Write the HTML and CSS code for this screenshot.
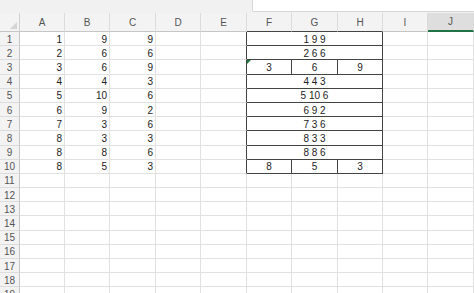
FILE: index.html
```html
<!DOCTYPE html>
<html lang="en">
<head>
    <meta charset="UTF-8">
    <meta name="viewport" content="width=device-width, initial-scale=1.0">
    <title>Sheet1</title>
    <link rel="stylesheet" href="styles.css">
</head>
<body>
    <!-- Formula bar edge -->
    <div class="top-bar">
        <div class="formula-box"></div>
    </div>

    <div class="sheet">
        <!-- Column headers -->
        <div class="row head">
            <div class="corner"><span class="corner-tri"></span></div>
            <div class="col">A</div>
            <div class="col">B</div>
            <div class="col">C</div>
            <div class="col">D</div>
            <div class="col">E</div>
            <div class="col blk">F</div>
            <div class="col blk">G</div>
            <div class="col blk">H</div>
            <div class="col">I</div>
            <div class="col selected">J</div>
        </div>

        <div class="row">
            <div class="rh">1</div>
            <div class="cell num">1</div><div class="cell num">9</div><div class="cell num">9</div>
            <div class="cell"></div><div class="cell edge"></div>
            <div class="cell box merged">1 9 9</div>
            <div class="cell"></div><div class="cell"></div>
        </div>
        <div class="row">
            <div class="rh">2</div>
            <div class="cell num">2</div><div class="cell num">6</div><div class="cell num">6</div>
            <div class="cell"></div><div class="cell edge"></div>
            <div class="cell box merged">2 6 6</div>
            <div class="cell"></div><div class="cell"></div>
        </div>
        <div class="row">
            <div class="rh">3</div>
            <div class="cell num">3</div><div class="cell num">6</div><div class="cell num">9</div>
            <div class="cell"></div><div class="cell edge"></div>
            <div class="cell box mid flagged">3</div><div class="cell box mid">6</div><div class="cell box mid">9</div>
            <div class="cell"></div><div class="cell"></div>
        </div>
        <div class="row">
            <div class="rh">4</div>
            <div class="cell num">4</div><div class="cell num">4</div><div class="cell num">3</div>
            <div class="cell"></div><div class="cell edge"></div>
            <div class="cell box merged">4 4 3</div>
            <div class="cell"></div><div class="cell"></div>
        </div>
        <div class="row">
            <div class="rh">5</div>
            <div class="cell num">5</div><div class="cell num">10</div><div class="cell num">6</div>
            <div class="cell"></div><div class="cell edge"></div>
            <div class="cell box merged">5 10 6</div>
            <div class="cell"></div><div class="cell"></div>
        </div>
        <div class="row">
            <div class="rh">6</div>
            <div class="cell num">6</div><div class="cell num">9</div><div class="cell num">2</div>
            <div class="cell"></div><div class="cell edge"></div>
            <div class="cell box merged">6 9 2</div>
            <div class="cell"></div><div class="cell"></div>
        </div>
        <div class="row">
            <div class="rh">7</div>
            <div class="cell num">7</div><div class="cell num">3</div><div class="cell num">6</div>
            <div class="cell"></div><div class="cell edge"></div>
            <div class="cell box merged">7 3 6</div>
            <div class="cell"></div><div class="cell"></div>
        </div>
        <div class="row">
            <div class="rh">8</div>
            <div class="cell num">8</div><div class="cell num">3</div><div class="cell num">3</div>
            <div class="cell"></div><div class="cell edge"></div>
            <div class="cell box merged">8 3 3</div>
            <div class="cell"></div><div class="cell"></div>
        </div>
        <div class="row">
            <div class="rh">9</div>
            <div class="cell num">8</div><div class="cell num">8</div><div class="cell num">6</div>
            <div class="cell"></div><div class="cell edge"></div>
            <div class="cell box merged">8 8 6</div>
            <div class="cell"></div><div class="cell"></div>
        </div>
        <div class="row">
            <div class="rh">10</div>
            <div class="cell num">8</div><div class="cell num">5</div><div class="cell num">3</div>
            <div class="cell"></div><div class="cell edge"></div>
            <div class="cell box mid">8</div><div class="cell box mid">5</div><div class="cell box mid">3</div>
            <div class="cell"></div><div class="cell"></div>
        </div>

        <!-- Empty rows -->
        <div class="row"><div class="rh">11</div><div class="cell"></div><div class="cell"></div><div class="cell"></div><div class="cell"></div><div class="cell"></div><div class="cell"></div><div class="cell"></div><div class="cell"></div><div class="cell"></div><div class="cell"></div></div>
        <div class="row"><div class="rh">12</div><div class="cell"></div><div class="cell"></div><div class="cell"></div><div class="cell"></div><div class="cell"></div><div class="cell"></div><div class="cell"></div><div class="cell"></div><div class="cell"></div><div class="cell"></div></div>
        <div class="row"><div class="rh">13</div><div class="cell"></div><div class="cell"></div><div class="cell"></div><div class="cell"></div><div class="cell"></div><div class="cell"></div><div class="cell"></div><div class="cell"></div><div class="cell"></div><div class="cell"></div></div>
        <div class="row"><div class="rh">14</div><div class="cell"></div><div class="cell"></div><div class="cell"></div><div class="cell"></div><div class="cell"></div><div class="cell"></div><div class="cell"></div><div class="cell"></div><div class="cell"></div><div class="cell"></div></div>
        <div class="row"><div class="rh">15</div><div class="cell"></div><div class="cell"></div><div class="cell"></div><div class="cell"></div><div class="cell"></div><div class="cell"></div><div class="cell"></div><div class="cell"></div><div class="cell"></div><div class="cell"></div></div>
        <div class="row"><div class="rh">16</div><div class="cell"></div><div class="cell"></div><div class="cell"></div><div class="cell"></div><div class="cell"></div><div class="cell"></div><div class="cell"></div><div class="cell"></div><div class="cell"></div><div class="cell"></div></div>
        <div class="row"><div class="rh">17</div><div class="cell"></div><div class="cell"></div><div class="cell"></div><div class="cell"></div><div class="cell"></div><div class="cell"></div><div class="cell"></div><div class="cell"></div><div class="cell"></div><div class="cell"></div></div>
        <div class="row"><div class="rh">18</div><div class="cell"></div><div class="cell"></div><div class="cell"></div><div class="cell"></div><div class="cell"></div><div class="cell"></div><div class="cell"></div><div class="cell"></div><div class="cell"></div><div class="cell"></div></div>
        <div class="row"><div class="rh">19</div><div class="cell"></div><div class="cell"></div><div class="cell"></div><div class="cell"></div><div class="cell"></div><div class="cell"></div><div class="cell"></div><div class="cell"></div><div class="cell"></div><div class="cell"></div></div>
    </div>
</body>
</html>
```

FILE: styles.css
```css
* {
    margin: 0;
    padding: 0;
    box-sizing: border-box;
}

body {
    font-family: "Liberation Sans", Arial, sans-serif;
    font-size: 10px;
    color: #222;
    background: #fff;
    overflow: hidden;
}

/* Formula bar edge */
.top-bar {
    height: 13px;
    background: #f1f1f1;
    display: flex;
    justify-content: flex-end;
}

.formula-box {
    width: 222px;
    height: 12px;
    background: #fff;
    border-left: 1px solid #d6d6d6;
    border-bottom: 1px solid #d6d6d6;
    border-bottom-left-radius: 2px;
}

/* Grid */
.row {
    display: grid;
    grid-template-columns: 20px 45px 45px 46px 45px 46px 45px 46px 45px 45px 46px;
    height: 14.2px;
}

.row.head {
    height: 19px;
    background: #f3f3f3;
}

.corner {
    position: relative;
    border-right: 1px solid #d0d0d0;
    border-bottom: 1px solid #c6c6c6;
}

.corner-tri {
    position: absolute;
    right: 2px;
    bottom: 2px;
    width: 0;
    height: 0;
    border-left: 7px solid transparent;
    border-bottom: 7px solid #d4d4d4;
}

.col {
    display: flex;
    align-items: center;
    justify-content: center;
    color: #555;
    border-right: 1px solid #dcdcdc;
    border-bottom: 1px solid #c6c6c6;
}

.col.blk {
    border-bottom-color: #444;
}

.col.selected {
    background: #dedede;
    border-bottom: 2px solid #217346;
}

.rh {
    background: #f3f3f3;
    color: #555;
    display: flex;
    align-items: center;
    justify-content: center;
    border-right: 1px solid #c6c6c6;
    border-bottom: 1px solid #dcdcdc;
    padding-top: 1px;
}

.cell {
    display: flex;
    align-items: center;
    border-right: 1px solid #e1e1e1;
    border-bottom: 1px solid #e1e1e1;
    padding-top: 1px;
    white-space: nowrap;
}

.cell.num {
    justify-content: flex-end;
    padding-right: 2px;
}

.cell.edge {
    border-right-color: #444;
}

.cell.box {
    border-right-color: #444;
    border-bottom-color: #444;
    justify-content: center;
}

.cell.merged {
    grid-column: span 3;
}

.cell.flagged {
    position: relative;
}

.cell.flagged::before {
    content: '';
    position: absolute;
    left: 0;
    top: 0;
    width: 0;
    height: 0;
    border-top: 4px solid #1e7a3c;
    border-right: 4px solid transparent;
}
```
